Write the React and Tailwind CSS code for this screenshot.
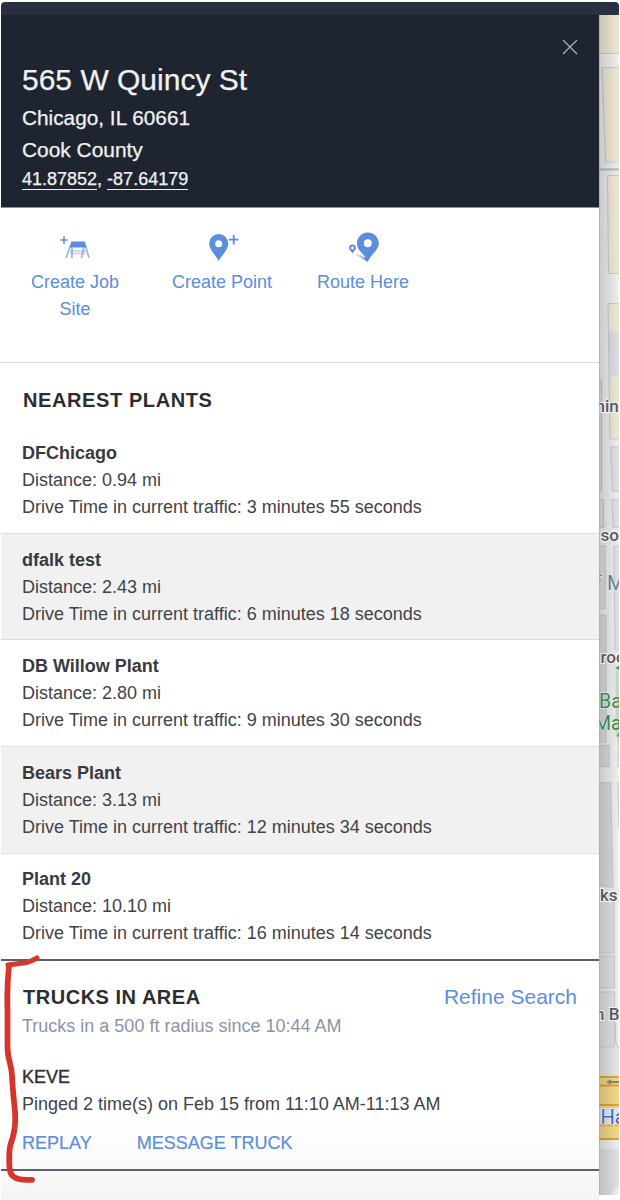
const plants = [
  { name: 'DFChicago', distance: '0.94 mi', driveTime: '3 minutes 55 seconds' },
  { name: 'dfalk test', distance: '2.43 mi', driveTime: '6 minutes 18 seconds' },
  { name: 'DB Willow Plant', distance: '2.80 mi', driveTime: '9 minutes 30 seconds' },
  { name: 'Bears Plant', distance: '3.13 mi', driveTime: '12 minutes 34 seconds' },
  { name: 'Plant 20', distance: '10.10 mi', driveTime: '16 minutes 14 seconds' },
];

function JobSiteIcon() {
  return (
    <svg width="30" height="34" viewBox="0 0 30 34" fill="none" stroke="#5b8edc">
      <path d="M0.3 12h7.400M4 8.300v7.500" strokeWidth="1.500" />
      <path d="M11.500 13.500h13.300l1.700 6H9.300z" fill="#5b8edc" stroke="none" />
      <path d="M10.500 17.500L6 30M12 19v11M25.500 17.500L29 30M24 19l-2.500 11" strokeWidth="1.800" opacity="0.6" />
      <path d="M10 23h16M10 25.500h15" strokeWidth="1.600" opacity="0.4" />
    </svg>
  );
}

function PointIcon() {
  return (
    <svg width="30" height="34" viewBox="0 0 30 34" className="relative left-[2px]">
      <path
        d="M9.700 6a9.500 9.500 0 0 0-9.500 9.500c0 6.600 7 12.500 9.500 17.500 2.500-5 9.500-10.900 9.500-17.500a9.500 9.500 0 0 0-9.500-9.500zm0 6.200a3.500 3.500 0 1 1 0 7 3.500 3.500 0 0 1 0-7z"
        fill="#5b8edc"
        fillRule="evenodd"
      />
      <path d="M19.700 11.600h9.800M24.700 6.700v9.800" stroke="#5b8edc" strokeWidth="1.800" />
    </svg>
  );
}

function RouteIcon() {
  return (
    <svg width="30" height="34" viewBox="0 0 30 34" className="relative left-px">
      <path
        d="M18.800 4.500a10.900 10.900 0 0 0-10.900 10.900c0 5.500 5 9 8.800 14.200L5 25l13.800 9c2-6.500 11-12 11-18.600a10.900 10.900 0 0 0-11-10.900zm0 6.700a4 4 0 1 1 0 8 4 4 0 0 1 0-8z"
        fill="#5b8edc"
        fillRule="evenodd"
      />
      <path
        d="M3.500 16.500a3.400 3.400 0 0 0-3.400 3.400c0 2 2.500 3.300 3.400 5.600.9-2.300 3.400-3.600 3.400-5.600a3.400 3.400 0 0 0-3.400-3.400zm0 2a1.400 1.400 0 1 1 0 2.800 1.400 1.400 0 0 1 0-2.800z"
        fill="#5b8edc"
        fillRule="evenodd"
      />
      <path d="M6 25.300l9.500 4.800" stroke="#fff" strokeWidth="0.800" />
    </svg>
  );
}

function Action({ icon, label, className }) {
  return (
    <button className={`flex flex-col items-center text-[18px] leading-[27px] text-[#5b8edc] ${className}`}>
      {icon}
      <span className="mt-[7px]">{label}</span>
    </button>
  );
}

function Header() {
  return (
    <header className="flex h-[193px] justify-between border-b border-[#8b8f98] bg-[#1f2530] pl-[21px] text-[#f1f1f2] [-webkit-text-stroke:0.25px_#f1f1f2]">
      <div>
        <h1 className="mt-[45px] text-[30px] leading-[40px]">565 W Quincy St</h1>
        <p className="mt-[2px] text-[20.8px] leading-[32px]">Chicago, IL 60661</p>
        <p className="text-[20.9px] leading-[31px]">Cook County</p>
        <p className="text-[18px] leading-[28px]">
          <span className="border-b border-[#f1f1f2]">41.87852</span>,{' '}
          <span className="border-b border-[#f1f1f2]">-87.64179</span>
        </p>
      </div>
      <button className="mt-[24px] mr-[21.500px] h-4 w-4">
        <svg width="16" height="16" viewBox="0 0 16 16" stroke="#b4b6ba" strokeWidth="1.1">
          <path d="M1 1l14 14M15 1L1 15" />
        </svg>
      </button>
    </header>
  );
}

function PlantRow({ plant }) {
  return (
    <li className="flex h-[106.6px] flex-col justify-center border-b border-[#dedfe0] pt-px pl-[21px] text-[18px] leading-[27px] last:border-b-0 last:pt-0 even:bg-[#f1f1f1]">
      <p className="font-bold text-[#383a3f]">{plant.name}</p>
      <p>Distance: {plant.distance}</p>
      <p>Drive Time in current traffic: {plant.driveTime}</p>
    </li>
  );
}

// Sliver of the street map left visible beside the drawer
function MapStrip() {
  return (
    <svg width="20" height="1180" viewBox="599 15 20 1180" className="block" fontFamily="Roboto, sans-serif">
      <defs>
        <linearGradient id="shade" x1="0" x2="1" y1="0" y2="0">
          <stop offset="0" stopColor="#000" stopOpacity="0.18" />
          <stop offset="1" stopColor="#000" stopOpacity="0.03" />
        </linearGradient>
      </defs>
      <rect x="599" y="15" width="20" height="1180" fill="#f5f5f5" />
      <g stroke="#cfd2d8" strokeWidth="1.2">
        <path d="M597 10h24v43.500h-24z" fill="#f4f0dc" />
        <path d="M602 67.500h20v94.500h-16.500z" fill="#f4f0dc" />
        <path d="M607.500 175.500h16v98h-15z" fill="#f4f0dc" />
        <path d="M608 303.500h16v135.500h-14z" fill="#f4f0dc" />
        <path d="M610.500 447h14v44.500h-12z" fill="#e6e8eb" />
        <path d="M597 380h4.500v111.500H597z" fill="#e6e8eb" />
        <path d="M597 499.500h6.500v28H597zM612 499.500h12v28h-11z" fill="#e6e8eb" />
        <path d="M597 546h8v62.500h-8zM614 546h10v104h-9z" fill="#e6e8eb" />
        <path d="M597 615h9v127h-9zM597 745.500h12.500v21H597z" fill="#e0e3e6" />
        <path d="M597 782.500h13.500l2.500 105-16-3z" fill="#dfe2e5" />
        <path d="M618 782.500h4v45h-3z" fill="#e6e8eb" />
        <path d="M597 895h17v58h-17zM597 956h17.500v32H597zM597 992h17.500v55H597z" fill="#e6e8eb" />
        <path d="M615.500 1023v17q1 8 6 10" fill="none" />
      </g>
      <path d="M608.800 332h12v44h-11.300z" fill="#e2e5ea" />
      <path d="M599 169.500h20" stroke="#c3c7ce" strokeWidth="2.500" />
      <path d="M615.500 668l4-2v84h-1.500l-1-12-1.500-4z" fill="#c3e6ce" />
      <path d="M615 668l5-3v5zM616.500 736l3.500-5v6z" fill="#3eae5b" />
      <path d="M617.500 750h2v17h-2z" fill="#d7d6e2" />
      <rect x="599" y="1048" width="20" height="28" fill="#ececee" />
      <rect x="599" y="1076" width="20" height="64" fill="#fbe08a" />
      <rect x="599" y="1108" width="20" height="16" fill="#eef0f4" />
      <path d="M599 1077h20M599 1085.500h20M599 1105h20M599 1139h20" stroke="#e4ad37" strokeWidth="2" />
      <path d="M599 1125.500h20" stroke="#e8b548" strokeWidth="1.500" strokeDasharray="6 2" />
      <rect x="599" y="1149" width="20" height="46" fill="#e7e8ec" />
      <path d="M612 1195q2-7 8-8v8z" fill="#f8f8f8" />
      <rect x="599" y="15" width="20" height="1180" fill="url(#shade)" />
      <path d="M606 1082l5-3v2h9v2h-9v2z" fill="#8a8070" />
      <g fontSize="17" fill="#55585e" stroke="#f2f2f2" strokeWidth="2" paintOrder="stroke" fontWeight="500">
        <text x="595.500" y="411.500">nin</text>
        <text x="600.500" y="540.500">so</text>
        <text x="600.500" y="662.500">roo</text>
        <text x="600" y="900.500">ks</text>
        <text x="595" y="1020">n B</text>
      </g>
      <g fontSize="20" stroke="#f2f2f2" strokeWidth="1" paintOrder="stroke">
        <text x="595" y="589.500" fill="#657f8d">f</text>
        <text x="607" y="589.500" fill="#657f8d">M</text>
        <text x="600.500" y="1124" fill="#3766c9">Ha</text>
      </g>
      <g fontSize="19.500" fill="#3f8352" stroke="#e4eee7" strokeWidth="1" paintOrder="stroke">
        <text x="599" y="708">Ba</text>
        <text x="594" y="729.500">Ma</text>
      </g>
      <path d="M599.500 15v1180" stroke="#a9abad" strokeWidth="1" opacity="0.6" />
    </svg>
  );
}

// Hand drawn red marker around the trucks section
function MarkerBracket() {
  return (
    <svg
      width="50"
      height="240"
      viewBox="0 950 50 240"
      className="pointer-events-none absolute top-[950px] left-0"
      fill="none"
      stroke="#d5352b"
      strokeLinecap="round"
      strokeLinejoin="round"
    >
      <path d="M37 958q-6 4-14 5l-15 2" strokeWidth="5" />
      <path
        d="M9 966c-1.500 13-2 29-1.500 44v38c0 12 4 15 4.500 28s2 24 3 36-1.500 24-4 31-2 15-1.500 24c.5 8 3 10 9 12 5 1.200 9 .8 13.500.8"
        strokeWidth="5.800"
      />
    </svg>
  );
}

function App() {
  return (
    <div
      className="relative h-[1200px] w-[620px] overflow-hidden bg-white pt-[2px] pl-px text-[#414349]"
      style={{ fontFamily: '"Liberation Sans", Arial, sans-serif' }}
    >
      <div className="h-[13px] w-[618px] rounded-t-[4px] bg-[#2a3040]" />
      <div className="flex">
        <main className="flex h-[1185px] w-[598px] shrink-0 flex-col">
          <Header />

          <section className="flex h-[155px] shrink-0 items-start border-b border-[#dcdde0] pt-[20px] pl-[21px]">
            <Action icon={<JobSiteIcon />} label="Create Job Site" className="w-[106px]" />
            <Action icon={<PointIcon />} label="Create Point" className="ml-[29px] w-[130px]" />
            <Action icon={<RouteIcon />} label="Route Here" className="ml-[11px] w-[130px]" />
          </section>

          <section className="shrink-0">
            <h2 className="h-[64.200px] pt-[22px] pl-[22px] text-[20px] leading-[30px] font-bold tracking-[0.6px] text-[#2b2d32]">
              NEAREST PLANTS
            </h2>
            <ul>
              {plants.map((plant) => (
                <PlantRow key={plant.name} plant={plant} />
              ))}
            </ul>
          </section>

          <section className="-mt-[1.200px] h-[212px] shrink-0 border-y-2 border-[#56616b] bg-linear-to-b from-white from-75% to-[#fafafa] px-[21px] pt-[21px] text-[18px] leading-[27px]">
            <div className="flex items-center justify-between leading-[30px]">
              <h2 className="pl-px text-[20px] font-bold tracking-[0.520px] text-[#2b2d32]">TRUCKS IN AREA</h2>
              <button className="mr-px text-[21px] text-[#5b8edc]">Refine Search</button>
            </div>
            <p className="mt-px text-[#8a94a8]">Trucks in a 500 ft radius since 10:44 AM</p>
            <p className="mt-6 text-[#2f3136] [-webkit-text-stroke:0.4px_#2f3136]">KEVE</p>
            <p>Pinged 2 time(s) on Feb 15 from 11:10 AM-11:13 AM</p>
            <div className="mt-3 flex gap-[45px] text-[#5b8edc] [-webkit-text-stroke:0.2px_#5b8edc]">
              <button>REPLAY</button>
              <button>MESSAGE TRUCK</button>
            </div>
          </section>
          <div className="flex-1 bg-linear-to-b from-[#fafafa] to-[#f3f3f3]" />
        </main>
        <MapStrip />
      </div>
      <MarkerBracket />
    </div>
  );
}

export default App;
